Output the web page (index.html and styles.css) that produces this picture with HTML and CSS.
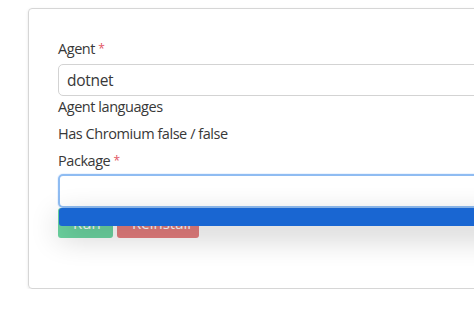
FILE: index.html
```html
<!DOCTYPE html>
<html lang="en">
<head>
  <meta charset="UTF-8" />
  <meta name="viewport" content="width=device-width, initial-scale=1.0" />
  <title>Run agent</title>
  <link rel="stylesheet" href="styles.css">
</head>
<body>
  <div id="page">
    <div class="card">
      <label class="field-label" for="agent">Agent <span class="req">*</span></label>
      <input id="agent" class="field" value="dotnet" />
      <div class="info">Agent languages</div>
      <div class="info">Has Chromium false / false</div>
      <label class="field-label pkg" for="package">Package <span class="req">*</span></label>
      <div class="combo">
        <input id="package" class="field focused" />
        <div class="dropdown"></div>
      </div>
      <div class="actions">
        <button class="btn run" disabled>Run</button>
        <button class="btn reinstall" disabled>Reinstall</button>
      </div>
    </div>
  </div>
</body>
</html>
```

FILE: styles.css
```css
body {
  margin: 0;
  padding: 0;
  background: white;
  font-family: "Open Sans", "Noto Sans", sans-serif;
  font-size: 14.5px;
  letter-spacing: -0.45px;
  color: #383838;
  overflow: hidden;
}

#page {
  padding: 8px 0 0 28px;
}

.card {
  width: 520px;
  height: 281px;
  box-sizing: border-box;
  border: 1px solid #d6d6d6;
  border-radius: 4px;
  box-shadow: 0 1px 3px rgba(0, 0, 0, 0.1);
  padding: 29px 29px;
  display: flex;
  flex-direction: column;
  align-items: flex-start;
}

.field-label {
  line-height: 21px;
  margin-bottom: 5px;
}

.field-label.pkg {
  margin-bottom: 3px;
}

.req {
  color: #e25563;
  font-size: 12px;
  vertical-align: top;
}

.field {
  width: 100%;
  height: 32px;
  box-sizing: border-box;
  border: 1px solid #d3d3d3;
  border-radius: 5px;
  padding: 0 8px;
  font-family: inherit;
  font-size: 15.5px;
  letter-spacing: -0.3px;
  color: #383838;
  outline: none;
}

.info {
  line-height: 21px;
  margin-bottom: 6px;
}

.combo {
  position: relative;
  width: 100%;
}

.field.focused {
  height: 34px;
  border: 2px solid #8fbcf2;
  box-shadow: 0 0 0 1px rgba(13, 110, 253, 0.08);
}

.dropdown {
  position: absolute;
  left: 1px;
  right: 0;
  top: 34px;
  height: 18px;
  background: #1966d2;
  border-radius: 3px;
  box-shadow: 0 10px 30px rgba(0, 0, 0, 0.24);
  z-index: 2;
}

.actions {
  display: flex;
  gap: 4px;
}

.btn {
  height: 30px;
  border: none;
  border-radius: 3px;
  color: white;
  font-family: inherit;
  font-size: 15px;
  padding: 0 15px;
  opacity: 0.65;
}

.run {
  background: #1fbf6f;
  width: 55px;
}

.reinstall {
  background: #d83a3a;
  width: 82px;
}
```
